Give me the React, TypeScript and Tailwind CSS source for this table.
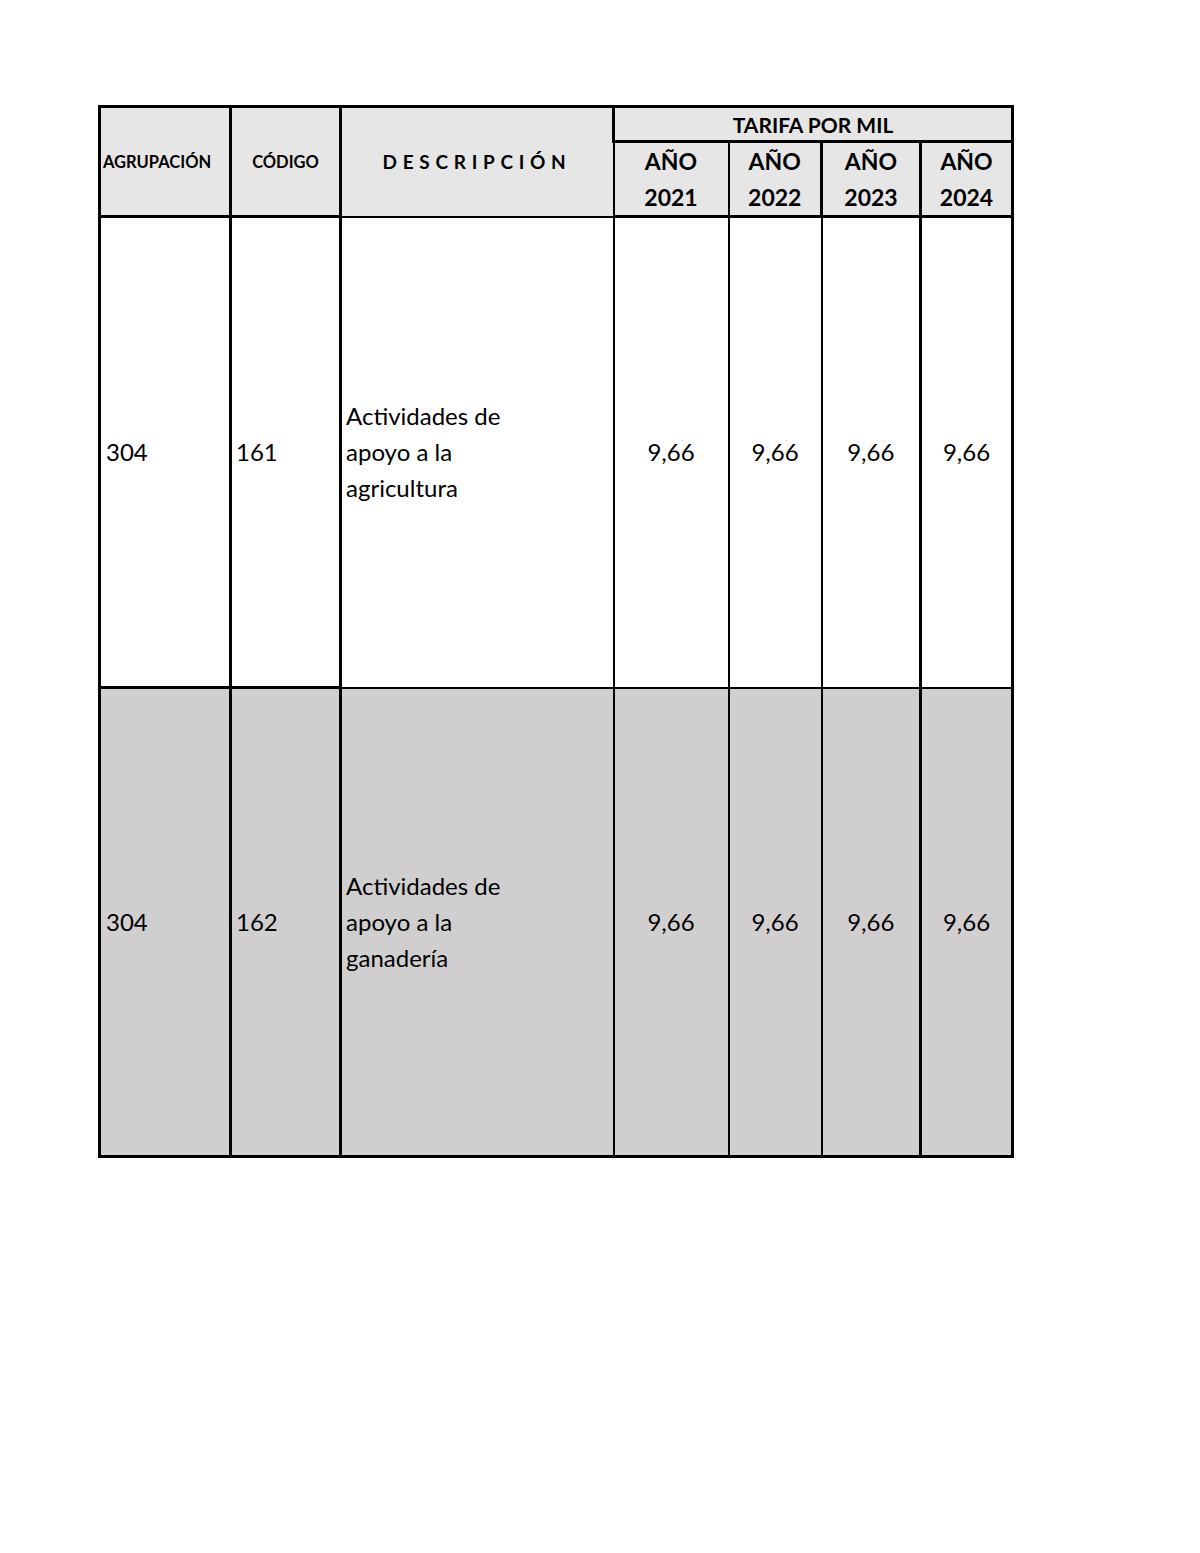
import React from 'react';

const rows = [
  { grupo: '304', codigo: '161', desc: ['Actividades de', 'apoyo a la', 'agricultura'], rowCls: 'h-[471px] bg-white' },
  { grupo: '304', codigo: '162', desc: ['Actividades de', 'apoyo a la', 'ganadería'], rowCls: 'h-[469px] bg-[#d0cece]' },
];

const years = ['2021', '2022', '2023', '2024'];

export default function App() {
  return (
    <div className="min-h-[1553px] bg-white pt-[105px] pl-[98px] text-black font-['Lato','Noto_Sans',sans-serif]">
      <table className="w-[913px] table-fixed border-collapse border-[3px] border-black">
        <colgroup>
          <col className="w-[131px]" />
          <col className="w-[110px]" />
          <col className="w-[273px]" />
          <col className="w-[115px]" />
          <col className="w-[93px]" />
          <col className="w-[99px]" />
          <col className="w-[92px]" />
        </colgroup>
        <thead className="bg-[#e7e6e6]">
          <tr className="h-[35px]">
            <th rowSpan={2} className="border-[3px] border-black pl-[2px] pt-[2px] text-left text-[16.5px] font-bold align-middle">AGRUPACIÓN</th>
            <th rowSpan={2} className="border-[3px] border-black pt-[2px] text-center text-[16.5px] font-bold align-middle">CÓDIGO</th>
            <th rowSpan={2} className="border-2 border-black text-center text-[19px] font-bold tracking-[0.3em] align-middle">DESCRIPCIÓN</th>
            <th colSpan={4} className="border-[3px] border-black text-center text-[21px] font-bold leading-none">TARIFA POR MIL</th>
          </tr>
          <tr className="h-[73px]">
            {years.map((y, i) => (
              <th key={y} className={`${i === 2 ? 'border-x-[3px]' : 'border-x-2'} border-y-[3px] border-black text-center text-[23px] font-bold leading-[36px]`}>
                <div>AÑO</div>
                <div>{y}</div>
              </th>
            ))}
          </tr>
        </thead>
        <tbody>
          {rows.map((r) => (
            <tr key={r.codigo} className={`${r.rowCls} text-[24px]`}>
              <td className="border-[3px] border-black pl-[5px] align-middle">{r.grupo}</td>
              <td className="border-[3px] border-black pl-[4px] align-middle">{r.codigo}</td>
              <td className="border-2 border-black pl-[4px] align-middle leading-[36px]">
                {r.desc.map((d) => (
                  <div key={d}>{d}</div>
                ))}
              </td>
              {years.map((y, i) => (
                <td key={y} className={`${i === 2 ? 'border-r-[3px]' : 'border-r-2'} border-l-2 border-y-2 border-black text-center align-middle`}>9,66</td>
              ))}
            </tr>
          ))}
        </tbody>
      </table>
    </div>
  );
}
